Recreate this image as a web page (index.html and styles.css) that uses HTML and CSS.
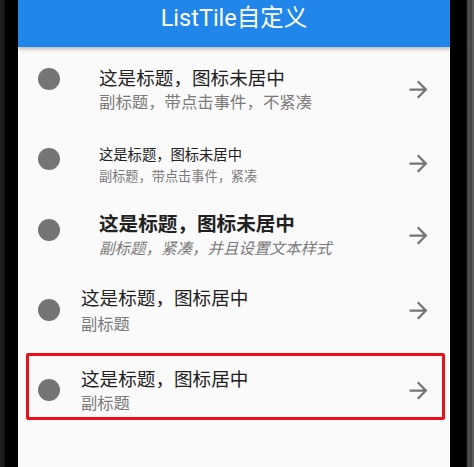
FILE: index.html
```html
<!DOCTYPE html>
<html lang="zh">
<head>
<meta charset="utf-8">
<title>ListTile自定义</title>
<link rel="stylesheet" href="styles.css">
</head>
<body>
<div class="device">
  <div class="screen">
    <header class="appbar"><h1 class="appbar-title">ListTile自定义</h1></header>
    <ul class="list">
      <li class="tile tile-1">
        <span class="leading"></span>
        <div class="texts">
          <div class="title">这是标题，图标未居中</div>
          <div class="subtitle">副标题，带点击事件，不紧凑</div>
        </div>
        <svg class="trailing" viewBox="0 0 24 24"><path d="M12 4l-1.41 1.41L16.17 11H4v2h12.17l-5.58 5.59L12 20l8-8z"/></svg>
      </li>
      <li class="tile tile-2">
        <span class="leading"></span>
        <div class="texts">
          <div class="title">这是标题，图标未居中</div>
          <div class="subtitle">副标题，带点击事件，紧凑</div>
        </div>
        <svg class="trailing" viewBox="0 0 24 24"><path d="M12 4l-1.41 1.41L16.17 11H4v2h12.17l-5.58 5.59L12 20l8-8z"/></svg>
      </li>
      <li class="tile tile-3">
        <span class="leading"></span>
        <div class="texts">
          <div class="title">这是标题，图标未居中</div>
          <div class="subtitle">副标题，紧凑，并且设置文本样式</div>
        </div>
        <svg class="trailing" viewBox="0 0 24 24"><path d="M12 4l-1.41 1.41L16.17 11H4v2h12.17l-5.58 5.59L12 20l8-8z"/></svg>
      </li>
      <li class="tile tile-4">
        <span class="leading"></span>
        <div class="texts">
          <div class="title">这是标题，图标居中</div>
          <div class="subtitle">副标题</div>
        </div>
        <svg class="trailing" viewBox="0 0 24 24"><path d="M12 4l-1.41 1.41L16.17 11H4v2h12.17l-5.58 5.59L12 20l8-8z"/></svg>
      </li>
      <li class="tile tile-5">
        <span class="leading"></span>
        <div class="texts">
          <div class="title">这是标题，图标居中</div>
          <div class="subtitle">副标题</div>
        </div>
        <svg class="trailing" viewBox="0 0 24 24"><path d="M12 4l-1.41 1.41L16.17 11H4v2h12.17l-5.58 5.59L12 20l8-8z"/></svg>
      </li>
    </ul>
  </div>
</div>
</body>
</html>
```

FILE: styles.css
```css
* { box-sizing: border-box; }

html, body {
  margin: 0;
  padding: 0;
  width: 474px;
  height: 467px;
  overflow: hidden;
}

body {
  background: #000;
  font-family: Roboto, "Noto Sans CJK SC", sans-serif;
}

.device {
  display: flex;
  height: 467px;
  padding-left: 18px;
  background: linear-gradient(to right,
    #1c1c1c 0, #1c1c1c 4px, #000 5px,
    #000 466px, #2e2e2e 467px, #5a5a5a 469px, #3a3a3a 471px, #6a6a6a 473px, #444 474px);
}

.screen {
  width: 432px;
  height: 467px;
  background: #fafafa;
  display: flex;
  flex-direction: column;
}

.appbar {
  height: 47px;
  background: #2186ea;
  box-shadow: 0 2px 4px rgba(0, 0, 0, 0.28);
  position: relative;
  z-index: 1;
  display: flex;
  justify-content: center;
  padding-top: 3px;
}

.appbar-title {
  margin: 0;
  color: #fff;
  font-weight: 400;
  font-size: 23.5px;
  line-height: 30px;
  font-family: Roboto, "Noto Sans CJK SC", sans-serif;
}

.list {
  list-style: none;
  margin: 0;
  padding: 0;
}

.tile {
  display: flex;
  align-items: center;
  padding-left: 20px;
  font-family: "Noto Sans CJK SC", sans-serif;
  position: relative;
}

.leading {
  width: 22px;
  height: 22px;
  border-radius: 50%;
  background: #757575;
  flex: none;
}

.texts {
  flex: 1;
  min-width: 0;
  white-space: nowrap;
}

.title {
  color: #212121;
}

.subtitle {
  color: #7a7a7a;
}

.trailing {
  width: 27px;
  height: 27px;
  flex: none;
  margin-right: 18px;
  fill: #757575;
}

/* Tile 1: icon top-aligned, regular */
.tile-1 { height: 84px; }
.tile-1 .leading { align-self: flex-start; margin-top: 21px; margin-right: 39px; }
.tile-1 .title { font-size: 18.6px; line-height: 24px; }
.tile-1 .subtitle { font-size: 16.4px; line-height: 24px; }

/* Tile 2: dense */
.tile-2 { height: 64px; }
.tile-2 .leading { align-self: flex-start; margin-top: 17px; margin-right: 39px; }
.tile-2 .texts { margin-top: 6px; }
.tile-2 .title { font-size: 14.3px; line-height: 20px; }
.tile-2 .subtitle { font-size: 13.2px; line-height: 24px; }

/* Tile 3: dense, styled text */
.tile-3 { height: 80px; }
.tile-3 .leading { align-self: flex-start; margin-top: 24px; margin-right: 39px; }
.tile-3 .title { font-size: 19.6px; line-height: 25px; font-weight: 700; }
.tile-3 .subtitle { font-size: 15.5px; line-height: 25px; font-style: italic; }

/* Tile 4: icon centered */
.tile-4 { height: 70px; }
.tile-4 .leading { margin-right: 21px; }
.tile-4 .title { font-size: 18.6px; line-height: 26px; }
.tile-4 .subtitle { font-size: 16.3px; line-height: 26px; }

/* Tile 5: icon centered, highlighted */
.tile-5 { height: 90px; }
.tile-5 .leading { margin-right: 21px; }
.tile-5 .title { font-size: 18.6px; line-height: 25px; }
.tile-5 .subtitle { font-size: 16.3px; line-height: 25px; }

.tile-5::after {
  content: "";
  position: absolute;
  left: 8px;
  right: 5px;
  top: 8px;
  bottom: 15px;
  border: 3px solid #e8101a;
  border-radius: 2px;
  pointer-events: none;
}
```
